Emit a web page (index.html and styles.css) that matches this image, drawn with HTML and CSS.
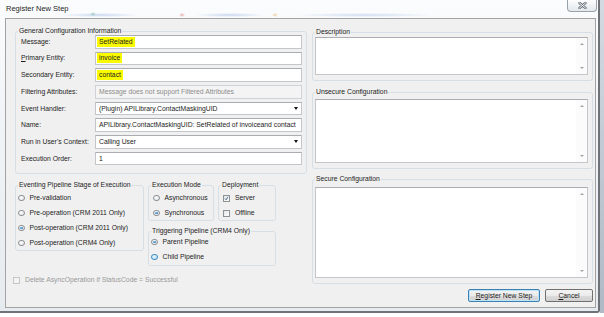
FILE: index.html
```html
<!DOCTYPE html>
<html>
<head>
<meta charset="utf-8">
<link rel="stylesheet" href="styles.css">
</head>
<body>
<div class="screen">
  <div class="window">
    <div class="titlebar">
      <span class="title">Register New Step</span>
      <div class="close">
        <svg width="9" height="7" viewBox="0 0 9 7"><path d="M1.5 1 L7.5 6 M7.5 1 L1.5 6" stroke="#6a727c" stroke-width="2.4" stroke-linecap="round"/><path d="M1.5 1 L7.5 6 M7.5 1 L1.5 6" stroke="#ffffff" stroke-width="0.9" stroke-linecap="round"/></svg>
      </div>
    </div>
    <div class="client">
      <div class="leftcol">
        <section class="grp general">
          <span class="legend">General Configuration Information</span>
          <div class="form">
            <span class="lbl">Message:</span>
            <div class="field"><span class="hl">SetRelated</span></div>
            <span class="lbl"><u>P</u>rimary Entity:</span>
            <div class="field"><span class="hl">invoice</span></div>
            <span class="lbl">Secondary Entity:</span>
            <div class="field"><span class="hl">contact</span></div>
            <span class="lbl">Filtering Attributes:</span>
            <div class="field disabled">Message does not support Filtered Attributes</div>
            <span class="lbl">Event Handler:</span>
            <div class="field select"><span>(Plugin) APILibrary.ContactMaskingUID</span><i class="arrow"></i></div>
            <span class="lbl">Name:</span>
            <div class="field">APILibrary.ContactMaskingUID: SetRelated of invoiceand contact</div>
            <span class="lbl">Run in User's Context:</span>
            <div class="field select"><span>Calling User</span><i class="arrow"></i></div>
            <span class="lbl">Execution Order:</span>
            <div class="field">1</div>
          </div>
        </section>
        <div class="options">
          <section class="grp eventing">
            <span class="legend">Eventing Pipeline Stage of Execution</span>
            <div class="list">
              <div class="opt"><span class="radio"></span>Pre-validation</div>
              <div class="opt"><span class="radio"></span>Pre-operation (CRM 2011 Only)</div>
              <div class="opt"><span class="radio on"></span>Post-operation (CRM 2011 Only)</div>
              <div class="opt"><span class="radio"></span>Post-operation (CRM4 Only)</div>
            </div>
          </section>
          <div class="midcol">
            <div class="midtop">
              <section class="grp execmode">
                <span class="legend">Execution Mode</span>
                <div class="list">
                  <div class="opt"><span class="radio"></span>Asynchronous</div>
                  <div class="opt"><span class="radio on"></span>Synchronous</div>
                </div>
              </section>
              <section class="grp deploy">
                <span class="legend">Deployment</span>
                <div class="list">
                  <div class="opt"><span class="check on"><svg width="7" height="7" viewBox="0 0 7 7"><path d="M1.4 3.6 L2.9 5.3 L5.7 1.2" fill="none" stroke="#2b4f80" stroke-width="1.2"/></svg></span>Server</div>
                  <div class="opt"><span class="check"></span>Offline</div>
                </div>
              </section>
            </div>
            <section class="grp trigger">
              <span class="legend">Triggering Pipeline (CRM4 Only)</span>
              <div class="list">
                <div class="opt"><span class="radio on"></span>Parent Pipeline</div>
                <div class="opt"><span class="radio hover"></span>Child Pipeline</div>
              </div>
            </section>
          </div>
        </div>
        <div class="opt delete"><span class="check dis"></span>Delete AsyncOperation if StatusCode = Successful</div>
      </div>
      <div class="rightcol">
        <section class="grp rgrp desc">
          <span class="legend">Description</span>
          <div class="area"><div class="sbar"><i class="up"></i><i class="down"></i></div></div>
        </section>
        <section class="grp rgrp unsec">
          <span class="legend">Unsecure Configuration</span>
          <div class="area"><div class="sbar"><i class="up"></i><i class="down"></i></div></div>
        </section>
        <section class="grp rgrp sec">
          <span class="legend">Secure Configuration</span>
          <div class="area"><div class="sbar"><i class="up"></i><i class="down"></i></div></div>
        </section>
        <div class="buttons">
          <button class="btn default"><u>R</u>egister New Step</button>
          <button class="btn cancel"><u>C</u>ancel</button>
        </div>
      </div>
    </div>
  </div>
  <div class="side"></div>
</div>
</body>
</html>
```
FILE: styles.css
```css
* { box-sizing: border-box; }
html, body { margin: 0; padding: 0; }
body {
  width: 604px;
  height: 317px;
  overflow: hidden;
  background: #ffffff;
  font-family: "Liberation Sans", Arial, sans-serif;
  font-size: 6.8px;
  color: #1c1c1c;
}
.screen { display: flex; width: 604px; height: 313px; }
.window {
  width: 600px;
  height: 313px;
  flex: none;
  display: flex;
  flex-direction: column;
  padding: 0 2px 3px 5px;
  border-right: 2px solid #6f7378;
  border-bottom: 2px solid #6f7378;
  border-bottom-right-radius: 3px;
  background: linear-gradient(180deg, #fbfcfd 0%, #f1f4f7 40%, #e6ebf0 100%);
}
.side { flex: 1; background: linear-gradient(180deg, #d3dae2, #aeb9c5); }
.titlebar {
  height: 18px;
  flex: none;
  display: flex;
  justify-content: space-between;
  align-items: flex-start;
  background-image:
    radial-gradient(ellipse 40px 2px at 95px 15px, rgba(110,150,215,0.35), transparent),
    radial-gradient(ellipse 3px 2px at 88px 14px, rgba(60,170,90,0.45), transparent),
    radial-gradient(ellipse 3px 2px at 177px 15px, rgba(215,70,70,0.45), transparent),
    radial-gradient(ellipse 35px 2px at 225px 15px, rgba(110,150,215,0.35), transparent),
    radial-gradient(ellipse 3px 2px at 270px 15px, rgba(230,150,50,0.45), transparent),
    radial-gradient(ellipse 70px 2px at 360px 15px, rgba(110,150,215,0.3), transparent);
}
.title { font-size: 7.5px; line-height: 8px; padding: 5px 0 0 1px; color: #1e1e1e; }
.close {
  width: 30px;
  height: 12px;
  margin-right: -1px;
  border: 1px solid #9aa2ab;
  border-top: none;
  border-radius: 0 0 4px 4px;
  background: linear-gradient(180deg, #fdfdfd, #e3e8ed);
  display: flex;
  align-items: center;
  justify-content: center;
}
.client {
  height: 290px;
  flex: none;
  display: flex;
  align-items: flex-start;
  gap: 5px;
  padding: 0 2px 0 9px;
  border: 1px solid #a3a3a3;
  background: #f0f0f0;
}
.leftcol { width: 292px; display: flex; flex-direction: column; }
.rightcol { width: 281px; display: flex; flex-direction: column; }
.leftcol > *, .rightcol > *, .midcol > * { flex: none; }

.grp {
  position: relative;
  border: 1px solid #d5dfe5;
  border-radius: 3px;
}
.legend {
  position: absolute;
  top: -5px;
  left: 2px;
  padding: 0 1px;
  line-height: 8px;
  background: #f0f0f0;
  white-space: nowrap;
}

/* general form */
.general { height: 143px; margin-top: 12px; padding: 3px 4px 0 5px; }
.form {
  display: grid;
  grid-template-columns: 74px 207px;
  row-gap: 3.2px;
  align-items: center;
}
.lbl { line-height: 8px; white-space: nowrap; }
.field {
  height: 13.5px;
  display: flex;
  align-items: center;
  padding: 0 3px;
  background: #ffffff;
  border: 1px solid #c3c7cc;
  border-top-color: #abadb3;
  white-space: nowrap;
  overflow: hidden;
  line-height: 8px;
}
.field.disabled { background: #f4f4f4; color: #8d8d8d; border-color: #cfd2d6; }
.field.select { justify-content: space-between; }
.arrow {
  width: 0; height: 0;
  border-left: 2.5px solid transparent;
  border-right: 2.5px solid transparent;
  border-top: 3px solid #111;
}
.hl {
  display: inline-block;
  background: #fbfb00;
  margin-left: -2px;
  padding: 0 2px;
  line-height: 10px;
}

/* options */
.options { display: flex; gap: 4px; margin-top: 11px; align-items: flex-start; }
.eventing { width: 129px; height: 66px; }
.midcol { display: flex; flex-direction: column; }
.midtop { display: flex; gap: 4px; }
.execmode { width: 66px; height: 36px; }
.deploy { width: 58px; height: 36px; }
.trigger { width: 128px; height: 35px; margin-top: 10px; }
.list { display: flex; flex-direction: column; gap: 7px; padding: 8px 0 0 2px; }
.trigger .list { padding-top: 6px; }
.execmode .list, .deploy .list { padding-left: 4px; }
.opt { display: flex; align-items: center; height: 8px; line-height: 8px; white-space: nowrap; }
.radio {
  width: 6.5px; height: 6.5px;
  border-radius: 50%;
  border: 1px solid #8c9196;
  background: radial-gradient(circle at 40% 35%, #ffffff, #d9dcdf);
  margin-right: 5px;
  display: flex; align-items: center; justify-content: center;
  flex: none;
}
.radio.on::after {
  content: "";
  width: 2.8px; height: 2.8px;
  border-radius: 50%;
  background: radial-gradient(circle at 40% 35%, #7cc2ef, #1b5c93);
}
.radio.hover { border-color: #3d8ac4; background: radial-gradient(circle at 40% 35%, #eaf6fd, #a9d8f4); }
.check {
  width: 7px; height: 7px;
  border: 1px solid #8c9196;
  background: linear-gradient(135deg, #e2e4e6, #ffffff);
  margin-right: 5px;
  flex: none;
  display: flex; align-items: center; justify-content: center;
}
.check svg { display: block; }
.delete { margin: 10px 0 0 -2px; color: #9a9a9a; }
.check.dis { border-color: #c6c6c6; background: #f4f4f4; }

/* right column */
.rgrp { padding: 0 4px 0 2px; }
.desc { height: 49px; margin-top: 13px; padding-top: 4px; }
.desc .area { height: 38px; }
.unsec { height: 77px; margin-top: 11px; padding-top: 6px; }
.unsec .area { height: 64px; }
.sec { height: 105px; margin-top: 10px; padding-top: 7px; }
.sec .area { height: 91px; }
.area {
  background: #ffffff;
  border: 1px solid #c3c7cc;
  border-top-color: #abadb3;
  display: flex;
  justify-content: flex-end;
}
.sbar {
  width: 11px;
  display: flex;
  flex-direction: column;
  justify-content: space-between;
  align-items: center;
  padding: 5px 0;
  background: #fbfbfb;
}
.sbar .up, .sbar .down { width: 0; height: 0; border-left: 2px solid transparent; border-right: 2px solid transparent; }
.sbar .up { border-bottom: 2px solid #9ea3a8; }
.sbar .down { border-top: 2px solid #9ea3a8; }

.buttons { display: flex; justify-content: flex-end; gap: 5px; margin-top: 5px; }
.btn {
  height: 13px;
  padding: 0;
  font-family: "Liberation Sans", Arial, sans-serif;
  font-size: 6.8px;
  line-height: 8px;
  color: #1c1c1c;
  border-radius: 2px;
  border: 1px solid #707070;
  background: linear-gradient(180deg, #f3f3f3 0%, #ebebeb 50%, #dddddd 51%, #cfcfcf 100%);
}
.btn.default { width: 72px; border-color: #3c7fb1; box-shadow: inset 0 0 0 1px #bde4f8; }
.btn.cancel { width: 48px; }
```
